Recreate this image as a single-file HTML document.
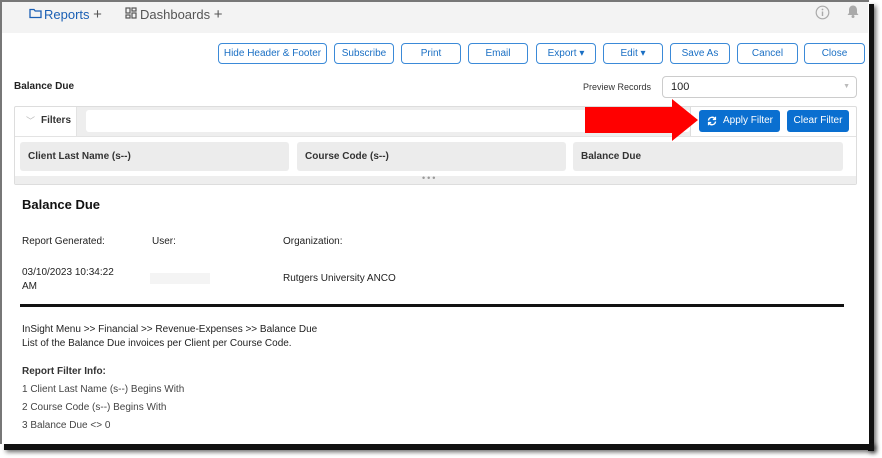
<!DOCTYPE html>
<html><head><style>
*{box-sizing:border-box;margin:0;padding:0}
body{width:882px;height:458px;background:#fff;font-family:"Liberation Sans",sans-serif;position:relative;overflow:hidden}
.a{position:absolute}
.frame{left:0;top:0;width:869px;height:444px;border-left:2px solid #777;border-top:2px solid #777;background:#fff;overflow:hidden}
.shadowR{left:868px;top:4px;width:6px;height:447px;background:#111;box-shadow:2px 2px 5px rgba(0,0,0,.6)}
.shadowB{left:4px;top:443px;width:870px;height:7px;background:#111;box-shadow:2px 2px 5px rgba(0,0,0,.6)}
.top{left:2px;top:2px;width:866px;height:31px;background:#f3f3f3}
.btn{position:absolute;top:43px;height:21px;border:1px solid #3b8ad8;border-radius:4px;color:#1a6fc4;font-size:10px;text-align:center;line-height:19px;background:#fff}
.t{position:absolute;font-size:10px;color:#222;white-space:nowrap}
.fb{position:absolute;top:142px;height:29px;background:#ececec;border-radius:3px;font-size:10px;font-weight:bold;color:#333;line-height:29px;padding-left:8px}
</style></head><body>
<div class="a shadowR"></div><div class="a shadowB"></div>
<div class="a frame"></div>
<div class="a top"></div>
<svg class="a" style="left:29px;top:7px" width="13" height="12" viewBox="0 0 13 12"><path d="M1 2.5h4l1.2 1.5H12v6.5H1z" fill="none" stroke="#1a5fb4" stroke-width="1.3"/></svg>
<div class="t" style="left:44px;top:6px;font-size:13px;color:#1a5fb4">Reports <span style="color:#555;font-size:15px">+</span></div>
<svg class="a" style="left:125px;top:7px" width="12" height="12" viewBox="0 0 12 12" fill="none" stroke="#555" stroke-width="1.2"><rect x="1" y="1" width="4" height="5"/><rect x="7" y="1" width="4" height="3"/><rect x="1" y="8" width="4" height="3"/><rect x="7" y="6" width="4" height="5"/></svg>
<div class="t" style="left:140px;top:6px;font-size:13px;color:#555">Dashboards <span style="font-size:15px">+</span></div>
<svg class="a" style="left:815px;top:5px" width="15" height="15" viewBox="0 0 15 15"><circle cx="7.5" cy="7.5" r="6.3" fill="none" stroke="#aaa" stroke-width="1.2"/><rect x="6.8" y="6.5" width="1.4" height="4.5" fill="#aaa"/><circle cx="7.5" cy="4.5" r=".9" fill="#aaa"/></svg>
<svg class="a" style="left:846px;top:4px" width="14" height="15" viewBox="0 0 14 15"><path d="M7 1.5c-2.5 0-4 2-4 4.5v3L1.5 11h11L11 9V6c0-2.5-1.5-4.5-4-4.5z" fill="#aaa"/><circle cx="7" cy="12.5" r="1.5" fill="#aaa"/></svg>

<div class="btn" style="left:218px;width:109px">Hide Header &amp; Footer</div>
<div class="btn" style="left:334px;width:60px">Subscribe</div>
<div class="btn" style="left:401px;width:60px">Print</div>
<div class="btn" style="left:468px;width:60px">Email</div>
<div class="btn" style="left:536px;width:60px">Export ▾</div>
<div class="btn" style="left:603px;width:60px">Edit ▾</div>
<div class="btn" style="left:670px;width:60px">Save As</div>
<div class="btn" style="left:737px;width:61px">Cancel</div>
<div class="btn" style="left:804px;width:61px">Close</div>

<div class="t" style="left:14px;top:81px;font-weight:bold;font-size:10px">Balance Due</div>
<div class="t" style="left:583px;top:82px;font-size:9px;color:#333">Preview Records</div>
<div class="a" style="left:662px;top:76px;width:195px;height:22px;border:1px solid #ccc;border-radius:4px;font-size:11px;line-height:20px;padding-left:8px;color:#222">100<span style="position:absolute;right:6px;color:#bbb;font-size:7px">▼</span></div>

<div class="a" style="left:14px;top:106px;width:843px;height:79px;border:1px solid #ddd;border-radius:2px;background:#fff"></div>
<div class="a" style="left:15px;top:107px;width:62px;height:29px;border-right:1px solid #e3e3e3"></div>
<div class="a" style="left:77px;top:107px;width:614px;height:29px;background:#eee;border-right:1px solid #ddd"></div>
<div class="a" style="left:86px;top:110px;width:604px;height:22px;background:#fff;border-radius:3px"></div>
<div class="a" style="left:15px;top:136px;width:841px;height:1px;background:#e3e3e3"></div>
<div class="t" style="left:26px;top:114px;color:#bbb;font-size:9px">﹀</div>
<div class="t" style="left:41px;top:115px;font-weight:bold;font-size:10px;color:#333">Filters</div>
<div class="a" style="left:699px;top:110px;width:81px;height:22px;background:#0a6fd0;border-radius:3px;color:#fff;font-size:10px;line-height:22px;padding-left:24px">Apply Filter</div>
<svg class="a" style="left:707px;top:116px" width="10" height="10" viewBox="0 0 10 10" fill="none" stroke="#fff" stroke-width="1.4"><path d="M1.5 4.5A3.5 3.5 0 0 1 8 3"/><path d="M8.5 5.5A3.5 3.5 0 0 1 2 7"/><path d="M8.5 0.8v2.7H5.8M1.5 9.2V6.5h2.7" stroke-width="1.2"/></svg>
<div class="a" style="left:787px;top:110px;width:62px;height:22px;background:#0a6fd0;border-radius:3px;color:#fff;font-size:10px;line-height:22px;text-align:center">Clear Filter</div>
<div class="fb" style="left:20px;width:269px">Client Last Name (s--)</div>
<div class="fb" style="left:297px;width:269px">Course Code (s--)</div>
<div class="fb" style="left:573px;width:270px">Balance Due</div>
<div class="a" style="left:15px;top:176px;width:841px;height:8px;background:#eee"></div>
<div class="t" style="left:422px;top:173px;color:#999;font-size:9px;letter-spacing:2px">•••</div>

<svg class="a" style="left:585px;top:99px" width="114" height="43" viewBox="0 0 114 43"><path d="M0 8H87V0L113 21L87 42V34H0z" fill="#f00"/></svg>

<div class="t" style="left:22px;top:197px;font-weight:bold;font-size:13px;color:#111">Balance Due</div>
<div class="t" style="left:22px;top:236px">Report Generated:</div>
<div class="t" style="left:152px;top:236px">User:</div>
<div class="t" style="left:283px;top:236px">Organization:</div>
<div class="t" style="left:22px;top:266px;line-height:14px">03/10/2023 10:34:22<br>AM</div>
<div class="a" style="left:150px;top:273px;width:60px;height:11px;background:#f4f4f4"></div>
<div class="t" style="left:283px;top:273px">Rutgers University ANCO</div>
<div class="a" style="left:20px;top:304px;width:824px;height:3px;background:#111"></div>
<div class="t" style="left:22px;top:323px;line-height:14px">InSight Menu &gt;&gt; Financial &gt;&gt; Revenue-Expenses &gt;&gt; Balance Due<br>List of the Balance Due invoices per Client per Course Code.</div>
<div class="t" style="left:22px;top:366px;font-weight:bold;color:#333">Report Filter Info:</div>
<div class="t" style="left:22px;top:384px;color:#444">1 Client Last Name (s--) Begins With</div>
<div class="t" style="left:22px;top:402px;color:#444">2 Course Code (s--) Begins With</div>
<div class="t" style="left:22px;top:420px;color:#444">3 Balance Due &lt;&gt; 0</div>
</body></html>
